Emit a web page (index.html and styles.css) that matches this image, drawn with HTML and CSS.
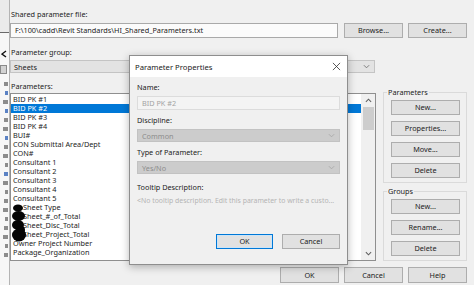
FILE: index.html
```html
<!DOCTYPE html>
<html lang="en">
<head>
  <meta charset="UTF-8" />
  <title>Edit Shared Parameters</title>
  <link rel="stylesheet" href="styles.css">
</head>
<body>
  <div class="screen">

    <!-- window behind the dialog, only its right edge shows -->
    <div class="behind">
      <div class="behind-top"></div>
      <svg class="behind-arrow" viewBox="0 0 6 8" width="6" height="8"><path d="M5 1 L1 4 L5 7" /></svg>
      <div class="behind-box"></div>
      <div class="behind-list">
        <i class="w4"></i><i class="w3 blue"></i><i class="w5"></i><i class="w3 blue"></i>
        <i class="w4"></i><i class="w5"></i><i class="w3 blue"></i><i class="w4"></i>
        <i class="w5"></i><i class="w3"></i><i class="w4 blue"></i><i class="w5"></i>
        <i class="w3"></i><i class="w4"></i><i class="w5"></i><i class="w3"></i>
        <i class="w4"></i><i class="w5"></i><i class="w3"></i><i class="w4"></i>
      </div>
    </div>

    <div class="dialog">
      <div class="label first">Shared parameter file:</div>
      <div class="file-row">
        <div class="field">F:\100\cadd\Revit Standards\HI_Shared_Parameters.txt</div>
        <button class="btn browse">Browse...</button>
        <button class="btn">Create...</button>
      </div>

      <div class="label second">Parameter group:</div>
      <div class="combo">
        <span>Sheets</span>
        <svg class="chev" viewBox="0 0 8 5" width="7" height="5"><path d="M1 1 L4 4 L7 1" /></svg>
      </div>

      <div class="label third">Parameters:</div>
      <div class="params-row">
        <div class="listbox">
          <ul class="items">
            <li>BID PK #1</li>
            <li class="selected">BID PK #2</li>
            <li>BID PK #3</li>
            <li>BID PK #4</li>
            <li>BUI#</li>
            <li>CON Submittal Area/Dept</li>
            <li>CON#</li>
            <li>Consultant 1</li>
            <li>Consultant 2</li>
            <li>Consultant 3</li>
            <li>Consultant 4</li>
            <li>Consultant 5</li>
            <li class="hidden-mark">Sheet Type</li>
            <li class="hidden-mark">Sheet_#_of_Total</li>
            <li class="hidden-mark">Sheet_Disc_Total</li>
            <li class="hidden-mark">Sheet_Project_Total</li>
            <li>Owner Project Number</li>
            <li>Package_Organization</li>
          </ul>
          <div class="scrollbar">
            <svg class="arrow" viewBox="0 0 8 5" width="7" height="5"><path d="M1 4 L4 1 L7 4" /></svg>
            <div class="thumb"></div>
            <div class="track"></div>
            <svg class="arrow" viewBox="0 0 8 5" width="7" height="5"><path d="M1 1 L4 4 L7 1" /></svg>
          </div>
          <!-- redaction scribble over the sheet rows -->
          <svg class="scribble" viewBox="0 0 16 40" width="16" height="40">
            <ellipse cx="7" cy="4" rx="5" ry="3.6" />
            <ellipse cx="7.5" cy="12" rx="6.5" ry="5" />
            <ellipse cx="7" cy="21" rx="6" ry="5" />
            <ellipse cx="8" cy="31" rx="7" ry="6.5" />
            <ellipse cx="10" cy="26" rx="4" ry="4" />
          </svg>
        </div>

        <div class="side">
          <fieldset class="group">
            <legend>Parameters</legend>
            <button class="btn side-btn">New...</button>
            <button class="btn side-btn">Properties...</button>
            <button class="btn side-btn">Move...</button>
            <button class="btn side-btn">Delete</button>
          </fieldset>
          <fieldset class="group groups">
            <legend>Groups</legend>
            <button class="btn side-btn">New...</button>
            <button class="btn side-btn">Rename...</button>
            <button class="btn side-btn">Delete</button>
          </fieldset>
        </div>
      </div>

      <div class="footer">
        <button class="btn">OK</button>
        <button class="btn">Cancel</button>
        <button class="btn">Help</button>
      </div>
    </div>

    <!-- Parameter Properties, opened over the main dialog -->
    <div class="modal">
      <div class="modal-title">
        <span>Parameter Properties</span>
        <svg class="close" viewBox="0 0 10 10" width="9" height="9"><path d="M1 1 L9 9 M9 1 L1 9" /></svg>
      </div>
      <div class="modal-body">
        <div class="m-label name-label">Name:</div>
        <div class="m-field">BID PK #2</div>
        <div class="m-label">Discipline:</div>
        <div class="m-combo">
          <span>Common</span>
          <svg class="chev" viewBox="0 0 8 5" width="7" height="5"><path d="M1 1 L4 4 L7 1" /></svg>
        </div>
        <div class="m-label type-label">Type of Parameter:</div>
        <div class="m-combo">
          <span>Yes/No</span>
          <svg class="chev" viewBox="0 0 8 5" width="7" height="5"><path d="M1 1 L4 4 L7 1" /></svg>
        </div>
        <div class="m-label tip-label">Tooltip Description:</div>
        <div class="tip">&lt;No tooltip description. Edit this parameter to write a custo...</div>
        <div class="m-buttons">
          <button class="btn default">OK</button>
          <button class="btn">Cancel</button>
        </div>
      </div>
    </div>

  </div>
</body>
</html>
```

FILE: styles.css
```css
* {
  box-sizing: border-box;
}

html, body {
  margin: 0;
}

body {
  width: 474px;
  height: 285px;
  overflow: hidden;
  background: #f0f0f0;
  font-family: "Noto Sans", sans-serif;
  font-size: 7.3px;
  color: #1c1c1c;
}

.screen {
  position: relative;
  display: flex;
  height: 285px;
}

/* window behind */
.behind {
  width: 10px;
  flex: none;
  display: flex;
  flex-direction: column;
  background: #f7f7f7;
  border-right: 1px solid #b4b4b4;
  overflow: hidden;
}

.behind-top {
  height: 33px;
  background: #ebebeb;
  border-bottom: 1px solid #6a6a6a;
}

.behind-arrow {
  margin: 17px 0 0 1px;
  fill: none;
  stroke: #111;
  stroke-width: 1.4;
}

.behind-box {
  width: 7px;
  height: 9px;
  margin-top: 7px;
  background: #d2d2d2;
  border: 1px solid #8a8a8a;
}

.behind-list {
  display: flex;
  flex-direction: column;
  align-items: flex-end;
  gap: 5px;
  margin-top: 8px;
  padding-right: 1px;
}

.behind-list i {
  height: 4px;
  background: #8c8c8c;
}

.behind-list i.blue {
  background: #5b82c4;
}

.behind-list .w3 {
  width: 3px;
}

.behind-list .w4 {
  width: 4px;
}

.behind-list .w5 {
  width: 5px;
}

/* main dialog */
.dialog {
  width: 457px;
  flex: none;
}

.label {
  height: 9px;
  line-height: 9px;
  padding-left: 1px;
  white-space: nowrap;
}

.label.first {
  margin-top: 10px;
}

.label.second {
  margin-top: 10px;
}

.label.third {
  margin-top: 9px;
}

.file-row {
  display: flex;
  gap: 5px;
  margin-top: 4px;
  height: 15px;
}

.field {
  width: 328px;
  margin-right: 1px;
  background: #fbfbfb;
  border: 1px solid #a9a9a9;
  padding: 0 4px;
  line-height: 13px;
  white-space: nowrap;
}

.btn {
  width: 59px;
  height: 15px;
  padding: 0;
  background: #e1e1e1;
  border: 1px solid #adadad;
  font: inherit;
  color: inherit;
  line-height: 13px;
  text-align: center;
}

.combo {
  display: flex;
  justify-content: space-between;
  align-items: center;
  width: 365px;
  height: 13px;
  margin-top: 3px;
  padding: 0 4px 0 3px;
  background: #e3e3e3;
  border: 1px solid #c4c4c4;
}

.chev {
  fill: none;
  stroke: #707070;
  stroke-width: 1;
}

.params-row {
  display: flex;
  gap: 7px;
  margin-top: 2px;
  height: 168px;
}

.listbox {
  position: relative;
  display: flex;
  width: 366px;
  height: 168px;
  background: #fff;
  border: 1px solid #8f8f8f;
}

.items {
  flex: 1;
  list-style: none;
  margin: 0;
  padding: 1px 0 0;
}

.items li {
  height: 9px;
  line-height: 9px;
  padding-left: 2px;
  white-space: nowrap;
}

.items li.selected {
  background: #0078d7;
  color: #fff;
}

.items li.hidden-mark {
  padding-left: 12px;
}

.scrollbar {
  display: flex;
  flex-direction: column;
  align-items: center;
  width: 14px;
  background: #f0f0f0;
}

.scrollbar .arrow {
  flex: none;
  margin: 4px 0;
  fill: none;
  stroke: #606060;
  stroke-width: 1.2;
}

.thumb {
  width: 11px;
  height: 23px;
  background: #cdcdcd;
}

.track {
  flex: 1;
}

.scribble {
  position: absolute;
  left: 0;
  top: 110px;
  fill: #050505;
}

/* right column */
.side {
  width: 84px;
  margin-top: -5px;
}

.group {
  display: flex;
  flex-direction: column;
  gap: 6px;
  margin: 0;
  padding: 3px 6px 4px 7px;
  border: 1px solid #dadada;
  min-inline-size: 0;
}

.group legend {
  padding: 0 1px;
  margin-left: -4px;
  line-height: 9px;
}

.groups {
  margin-top: 4px;
}

.side-btn {
  width: 69px;
}

.footer {
  display: flex;
  justify-content: flex-end;
  gap: 5px;
  margin-top: 6px;
}

.footer .btn {
  height: 16px;
}

/* Parameter Properties */
.modal {
  position: absolute;
  left: 129px;
  top: 55px;
  width: 219px;
  height: 210px;
  background: #f0f0f0;
  border: 1px solid #8e8e8e;
  box-shadow: 0 2px 8px rgba(0, 0, 0, 0.28);
}

.modal-title {
  display: flex;
  justify-content: space-between;
  align-items: center;
  height: 21px;
  padding: 0 6px 0 5px;
  background: #fff;
  font-size: 7.7px;
  color: #222;
}

.close {
  fill: none;
  stroke: #333;
  stroke-width: 0.9;
}

.modal-body {
  padding: 0 7px;
}

.m-label {
  height: 9px;
  line-height: 9px;
  margin-top: 6px;
  white-space: nowrap;
}

.m-label.name-label {
  margin-top: 6px;
}

.m-label.type-label {
  margin-top: 6px;
}

.m-label.tip-label {
  margin-top: 9px;
}

.m-field {
  height: 14px;
  margin-top: 4px;
  padding: 0 4px;
  line-height: 12px;
  background: #f4f4f4;
  border: 1px solid #dcdcdc;
  color: #a3a3a3;
}

.m-combo {
  display: flex;
  justify-content: space-between;
  align-items: center;
  height: 13px;
  margin-top: 4px;
  padding: 0 4px 0 4px;
  background: #cccccc;
  border: 1px solid #c2c2c2;
  color: #8c8c8c;
}

.m-combo .chev {
  stroke: #a8a8a8;
}

.tip {
  margin-top: 4px;
  line-height: 9px;
  font-size: 6.9px;
  color: #b4b4b4;
  white-space: nowrap;
}

.m-buttons {
  display: flex;
  justify-content: flex-end;
  gap: 9px;
  margin-top: 29px;
}

.m-buttons .btn {
  width: 58px;
}

.m-buttons .btn.default {
  width: 57px;
  border: 1px solid #0078d7;
  box-shadow: inset 0 0 0 1px #cce4f7;
}
```
